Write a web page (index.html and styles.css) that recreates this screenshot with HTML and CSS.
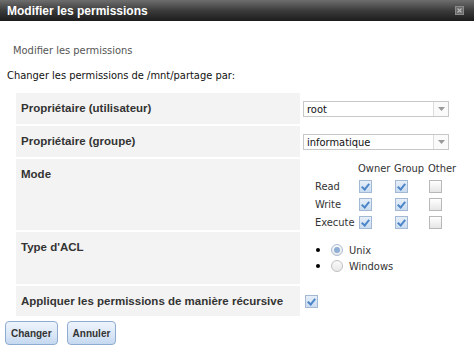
FILE: index.html
```html
<!DOCTYPE html>
<html lang="fr">
<head>
<meta charset="utf-8">
<link rel="stylesheet" href="styles.css">
</head>
<body>
<div class="titlebar">
  <span class="title">Modifier les permissions</span>
  <svg class="close" width="9" height="9" viewBox="0 0 9 9"><rect x="0.5" y="0.5" width="8" height="8" fill="#6a6a6a" stroke="#8a8a8a"/><path d="M2.5 2.5 L6.5 6.5 M6.5 2.5 L2.5 6.5" stroke="#b8b8b8" stroke-width="1.2"/></svg>
</div>
<div class="content">
  <p class="subtitle">Modifier les permissions</p>
  <p class="intro">Changer les permissions de /mnt/partage par:</p>
  <div class="form">
    <div class="label">Propriétaire (utilisateur)</div>
    <div class="value v-select">
      <div class="select"><span class="sel-text">root</span><span class="sel-arrow"><svg width="7" height="4" viewBox="0 0 7 4"><path d="M0 0 H7 L3.5 4 Z" fill="#9a9a9a"/></svg></span></div>
    </div>
    <div class="label">Propriétaire (groupe)</div>
    <div class="value v-select">
      <div class="select"><span class="sel-text">informatique</span><span class="sel-arrow"><svg width="7" height="4" viewBox="0 0 7 4"><path d="M0 0 H7 L3.5 4 Z" fill="#9a9a9a"/></svg></span></div>
    </div>
    <div class="label">Mode</div>
    <div class="value v-mode">
      <div class="perm">
        <span></span><span class="ph">Owner</span><span class="ph">Group</span><span class="ph">Other</span>
        <span class="pl">Read</span><span class="cb on"></span><span class="cb on"></span><span class="cb"></span>
        <span class="pl">Write</span><span class="cb on"></span><span class="cb on"></span><span class="cb"></span>
        <span class="pl">Execute</span><span class="cb on"></span><span class="cb on"></span><span class="cb"></span>
      </div>
    </div>
    <div class="label">Type d'ACL</div>
    <div class="value v-acl">
      <ul class="radios">
        <li><span class="rb on"></span>Unix</li>
        <li><span class="rb"></span>Windows</li>
      </ul>
    </div>
    <div class="label">Appliquer les permissions de manière récursive</div>
    <div class="value v-rec"><span class="cb on"></span></div>
  </div>
  <div class="buttons">
    <button class="btn">Changer</button>
    <button class="btn">Annuler</button>
  </div>
</div>
</body>
</html>
```
FILE: styles.css
```css
html, body {
  margin: 0;
  padding: 0;
  background: #ffffff;
}
body {
  font-family: "DejaVu Sans Condensed", "DejaVu Sans", sans-serif;
  font-size: 11px;
  color: #222;
}
.titlebar {
  height: 21px;
  background: linear-gradient(to bottom, #6e6e6e 0%, #3c3c3c 50%, #1c1c1c 100%);
  display: flex;
  align-items: center;
  justify-content: space-between;
  padding: 0 10px 0 7px;
}
.title {
  color: #fff;
  font-family: "Liberation Sans", Arial, sans-serif;
  font-weight: bold;
  font-size: 12px;
}
.close {
  display: block;
}
.content {
  padding: 0 5px;
}
.subtitle {
  margin: 22px 0 0 0;
  padding-left: 8px;
  line-height: 15px;
  color: #555;
}
.intro {
  margin: 10px 0 0 0;
  padding-left: 2px;
  line-height: 15px;
  color: #111;
}
.form {
  margin: 10px 0 0 11px;
  display: grid;
  grid-template-columns: 284px 1fr;
  row-gap: 2px;
}
.label {
  background: #f3f3f3;
  font-family: "Liberation Sans", Arial, sans-serif;
  font-weight: bold;
  font-size: 11.5px;
  color: #333;
  padding: 8px 0 0 5px;
  line-height: 15px;
}
.value {
  padding-left: 3px;
}
.v-select {
  padding-top: 8px;
  padding-bottom: 7px;
}
.select {
  width: 144px;
  height: 14px;
  border: 1px solid #c8c8c8;
  background: #fff;
  display: flex;
  align-items: center;
}
.sel-text {
  flex: 1;
  padding-left: 3px;
  color: #111;
}
.sel-arrow {
  width: 14px;
  height: 14px;
  border-left: 1px solid #dcdcdc;
  background: #fafafa;
  display: flex;
  align-items: center;
  justify-content: center;
}
.v-mode {
  padding: 1px 0 0 15px;
  height: 70px;
}
.perm {
  display: grid;
  grid-template-columns: 43px 36px 34px 36px;
  grid-auto-rows: 18px;
  grid-template-rows: 17px;
  align-items: center;
  color: #333;
}
.ph, .pl {
  line-height: 15px;
}
.cb {
  display: block;
  width: 11px;
  height: 11px;
  border: 1px solid #b8b8b8;
  background: linear-gradient(to bottom, #ffffff, #e6e6e6);
  margin-left: 1px;
  position: relative;
}
.cb.on {
  border-color: #a3b8d2;
  background: linear-gradient(to bottom, #e6eff9, #cadcf0);
}
.cb.on::after {
  content: "";
  position: absolute;
  left: 3px;
  top: 1px;
  width: 3px;
  height: 6px;
  border: solid #4d86c8;
  border-width: 0 2px 2px 0;
  transform: rotate(40deg);
}
.v-acl {
  padding: 10px 0 10px 0;
}
.radios {
  margin: 0;
  padding-left: 31px;
  list-style: disc;
}
.radios li {
  line-height: 15px;
  color: #333;
}
.radios li::marker {
  font-size: 13px;
  color: #000;
}
.rb {
  display: inline-block;
  vertical-align: -2px;
  width: 10px;
  height: 10px;
  border: 1px solid #c0c0c0;
  border-radius: 50%;
  background: linear-gradient(to bottom, #fafafa, #e8e8e8);
  margin: 0 6px 0 0;
  position: relative;
}
.rb.on {
  border-color: #a9bcd4;
}
.rb.on::after {
  content: "";
  position: absolute;
  left: 2px;
  top: 2px;
  width: 6px;
  height: 6px;
  border-radius: 50%;
  background: #8eaed6;
}
.v-rec {
  display: flex;
  align-items: center;
  padding-left: 4px;
  height: 30px;
}
.buttons {
  margin-top: 5px;
  display: flex;
  gap: 9px;
}
.btn {
  font-family: "Liberation Sans", Arial, sans-serif;
  font-size: 10px;
  font-weight: bold;
  color: #333;
  height: 24px;
  padding: 0 5px;
  border: 1px solid #8fabd0;
  border-radius: 4px;
  background: linear-gradient(to bottom, #eef4fc 0%, #d9e6f6 60%, #c4d8f0 100%);
}
```
